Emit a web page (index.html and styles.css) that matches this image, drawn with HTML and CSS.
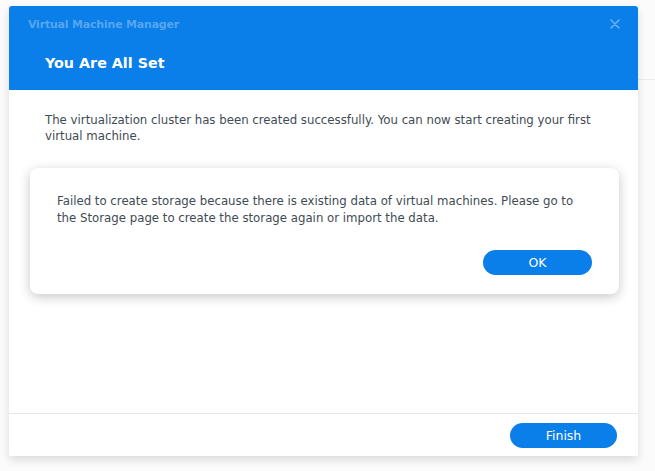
FILE: index.html
```html
<!DOCTYPE html>
<html lang="en">
<head>
    <meta charset="UTF-8">
    <meta name="viewport" content="width=device-width, initial-scale=1.0">
    <title>Virtual Machine Manager</title>
    <link rel="stylesheet" href="styles.css">
</head>
<body>
    <div class="backdrop-line"></div>

    <div class="window">
        <div class="window-header">
            <div class="titlebar">
                <span class="app-title">Virtual Machine Manager</span>
                <button class="close-btn" aria-label="Close">
                    <svg width="10" height="10" viewBox="0 0 10 10">
                        <path d="M1 1 L9 9 M9 1 L1 9" stroke="currentColor" stroke-width="1.6" stroke-linecap="round"/>
                    </svg>
                </button>
            </div>
            <h2>You Are All Set</h2>
        </div>

        <div class="window-body">
            <p>The virtualization cluster has been created successfully. You can now start creating your first virtual machine.</p>
        </div>

        <div class="window-footer">
            <button class="btn">Finish</button>
        </div>

        <!-- message box over the wizard -->
        <div class="msgbox">
            <p>Failed to create storage because there is existing data of virtual machines. Please go to the Storage page to create the storage again or import the data.</p>
            <div class="msgbox-actions">
                <button class="btn btn-ok">OK</button>
            </div>
        </div>
    </div>
</body>
</html>
```

FILE: styles.css
```css
:root {
    --blue: #0a7ee9;
    --text: #414b55;
    --line: #e6e8ea;
}

* {
    box-sizing: border-box;
    margin: 0;
    padding: 0;
}

body {
    font-family: 'DejaVu Sans', Verdana, sans-serif;
    background-color: #fbfbfb;
    color: var(--text);
    width: 655px;
    height: 471px;
    overflow: hidden;
    padding: 6px 0 0 9px;
    position: relative;
}

.backdrop-line {
    position: absolute;
    top: 79px;
    right: 0;
    width: 40px;
    border-top: 1px solid #ececec;
}

.window {
    position: relative;
    width: 629px;
    height: 450px;
    background: #fff;
    border-radius: 3px 3px 0 0;
    box-shadow: 0 4px 10px rgba(0, 0, 0, 0.13);
    display: flex;
    flex-direction: column;
}

.window-header {
    background: var(--blue);
    height: 84px;
    border-radius: 3px 3px 0 0;
    color: #fff;
}

.titlebar {
    height: 36px;
    display: flex;
    align-items: center;
    justify-content: space-between;
    padding: 0 18px 0 19px;
}

.app-title {
    font-size: 11px;
    font-weight: bold;
    color: rgba(255, 255, 255, 0.32);
    letter-spacing: -0.2px;
}

.close-btn {
    background: none;
    border: none;
    color: rgba(255, 255, 255, 0.4);
    display: flex;
    cursor: pointer;
}

h2 {
    font-size: 14.3px;
    font-weight: bold;
    padding: 13px 0 0 36px;
}

.window-body {
    flex: 1;
    padding: 22px 30px 20px 36px;
    font-size: 11.75px;
    line-height: 16px;
}

.window-footer {
    height: 43px;
    border-top: 1px solid var(--line);
    display: flex;
    align-items: center;
    justify-content: flex-end;
    padding-right: 21px;
}

.btn {
    width: 107px;
    height: 25px;
    border: none;
    border-radius: 13px;
    background: var(--blue);
    color: #fff;
    font-family: 'DejaVu Sans', Verdana, sans-serif;
    font-size: 12.5px;
    cursor: pointer;
}

.msgbox {
    position: absolute;
    top: 162px;
    left: 21px;
    width: 589px;
    height: 126px;
    background: #fff;
    border-radius: 8px;
    box-shadow: 0 3px 12px rgba(0, 0, 0, 0.22);
    padding: 25px 27px 0 27px;
    font-size: 11.75px;
    line-height: 17px;
}

.msgbox-actions {
    display: flex;
    justify-content: flex-end;
    margin-top: 23px;
}

.btn-ok {
    width: 109px;
}
```
